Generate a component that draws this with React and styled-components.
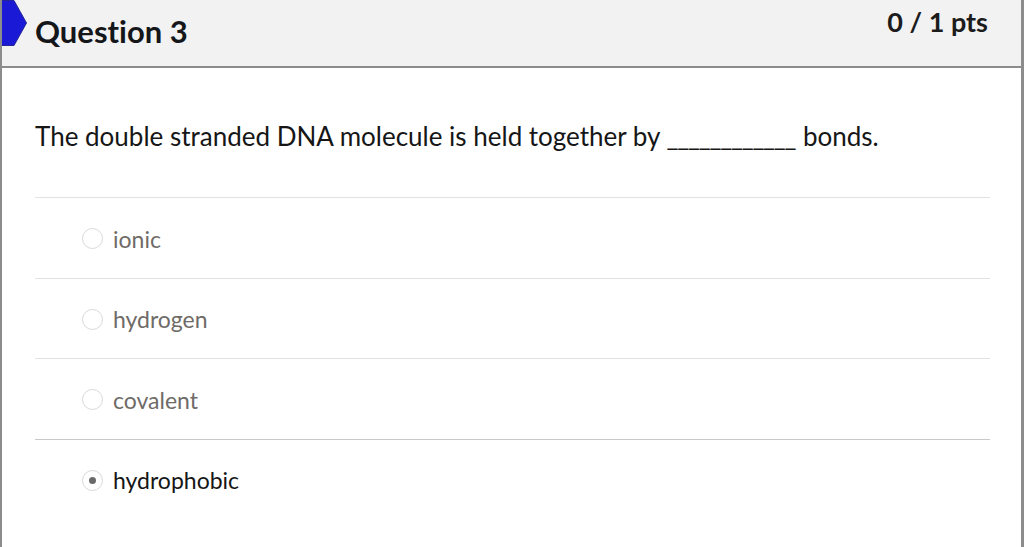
import styled, { createGlobalStyle } from "styled-components";

const GlobalStyle = createGlobalStyle`
	html, body {
		margin: 0;
		padding: 0;
		background: #ffffff;
	}
	body {
		font-family: Lato, "Noto Sans", sans-serif;
		font-variant-ligatures: none;
		color: #161616;
	}
`;

const Card = styled.div`
	width: 1024px;
	height: 547px;
	box-sizing: border-box;
	border-left: 2px solid #8c8c8c;
	border-right: 3px solid #8c8c8c;
	overflow: hidden;
`;

const Header = styled.div`
	position: relative;
	height: 66px;
	background: #f2f2f2;
	border-bottom: 2px solid #8c8c8c;
	display: flex;
	justify-content: space-between;
	align-items: flex-start;
	padding: 0 33px 0 33px;
`;

const Tag = styled.svg`
	position: absolute;
	left: -2px;
	top: 0;
`;

const Title = styled.h2`
	margin: 11px 0 0;
	font-size: 31px;
	font-weight: 700;
	line-height: 40px;
	color: #14161a;
`;

const Points = styled.div`
	margin-top: 4px;
	font-size: 27px;
	font-weight: 700;
	line-height: 36px;
	color: #1c1c1c;
`;

const Body = styled.div`
	padding: 0 31px 0 33px;
`;

const QuestionText = styled.p`
	margin: 0;
	padding: 51px 0 44px;
	font-size: 26px;
	line-height: 34px;
	color: #161616;
	white-space: nowrap;
`;

const Blank = styled.span`
	letter-spacing: -1.2px;
	margin-right: 1px;
`;

const Option = styled.label`
	display: flex;
	align-items: center;
	height: 80.5px;
	border-top: 1px solid ${ p => ( p.strong ? "#c9c9c9" : "#e2e2e2" ) };
	padding-left: 47px;
	box-sizing: border-box;
	padding-top: 2px;
`;

const Radio = styled.span`
	width: 19px;
	height: 19px;
	border-radius: 50%;
	border: 1px solid #d9d9d9;
	display: flex;
	align-items: center;
	justify-content: center;
	margin-right: 10px;
	flex-shrink: 0;
	&::after {
		content: "";
		display: ${ p => ( p.checked ? "block" : "none" ) };
		width: 7px;
		height: 7px;
		border-radius: 50%;
		background: #6a6a6a;
	}
`;

const OptionLabel = styled.span`
	font-size: 23px;
	color: ${ p => ( p.checked ? "#161616" : "#6f6b67" ) };
`;

const options = [
	{ text: "ionic" },
	{ text: "hydrogen" },
	{ text: "covalent" },
	{ text: "hydrophobic", checked: true },
];

const App = () => (
	<>
		<GlobalStyle />
		<Card>
			<Header>
				<Tag width="28" height="46" viewBox="0 0 28 46">
					<polygon points="0,0.5 14,0.5 26.5,23 14,45.5 0,45.5" fill="#1a1ad6" stroke="#23239a" strokeWidth="1" />
				</Tag>
				<Title>Question 3</Title>
				<Points>0 / 1 pts</Points>
			</Header>
			<Body>
				<QuestionText>
					The double stranded DNA molecule is held together by <Blank>____________</Blank> bonds.
				</QuestionText>
				{ options.map( ( o, i ) => (
					<Option key={ o.text } strong={ i === options.length - 1 }>
						<Radio checked={ o.checked } />
						<OptionLabel checked={ o.checked }>{ o.text }</OptionLabel>
					</Option>
				) ) }
			</Body>
		</Card>
	</>
);

export default App;
